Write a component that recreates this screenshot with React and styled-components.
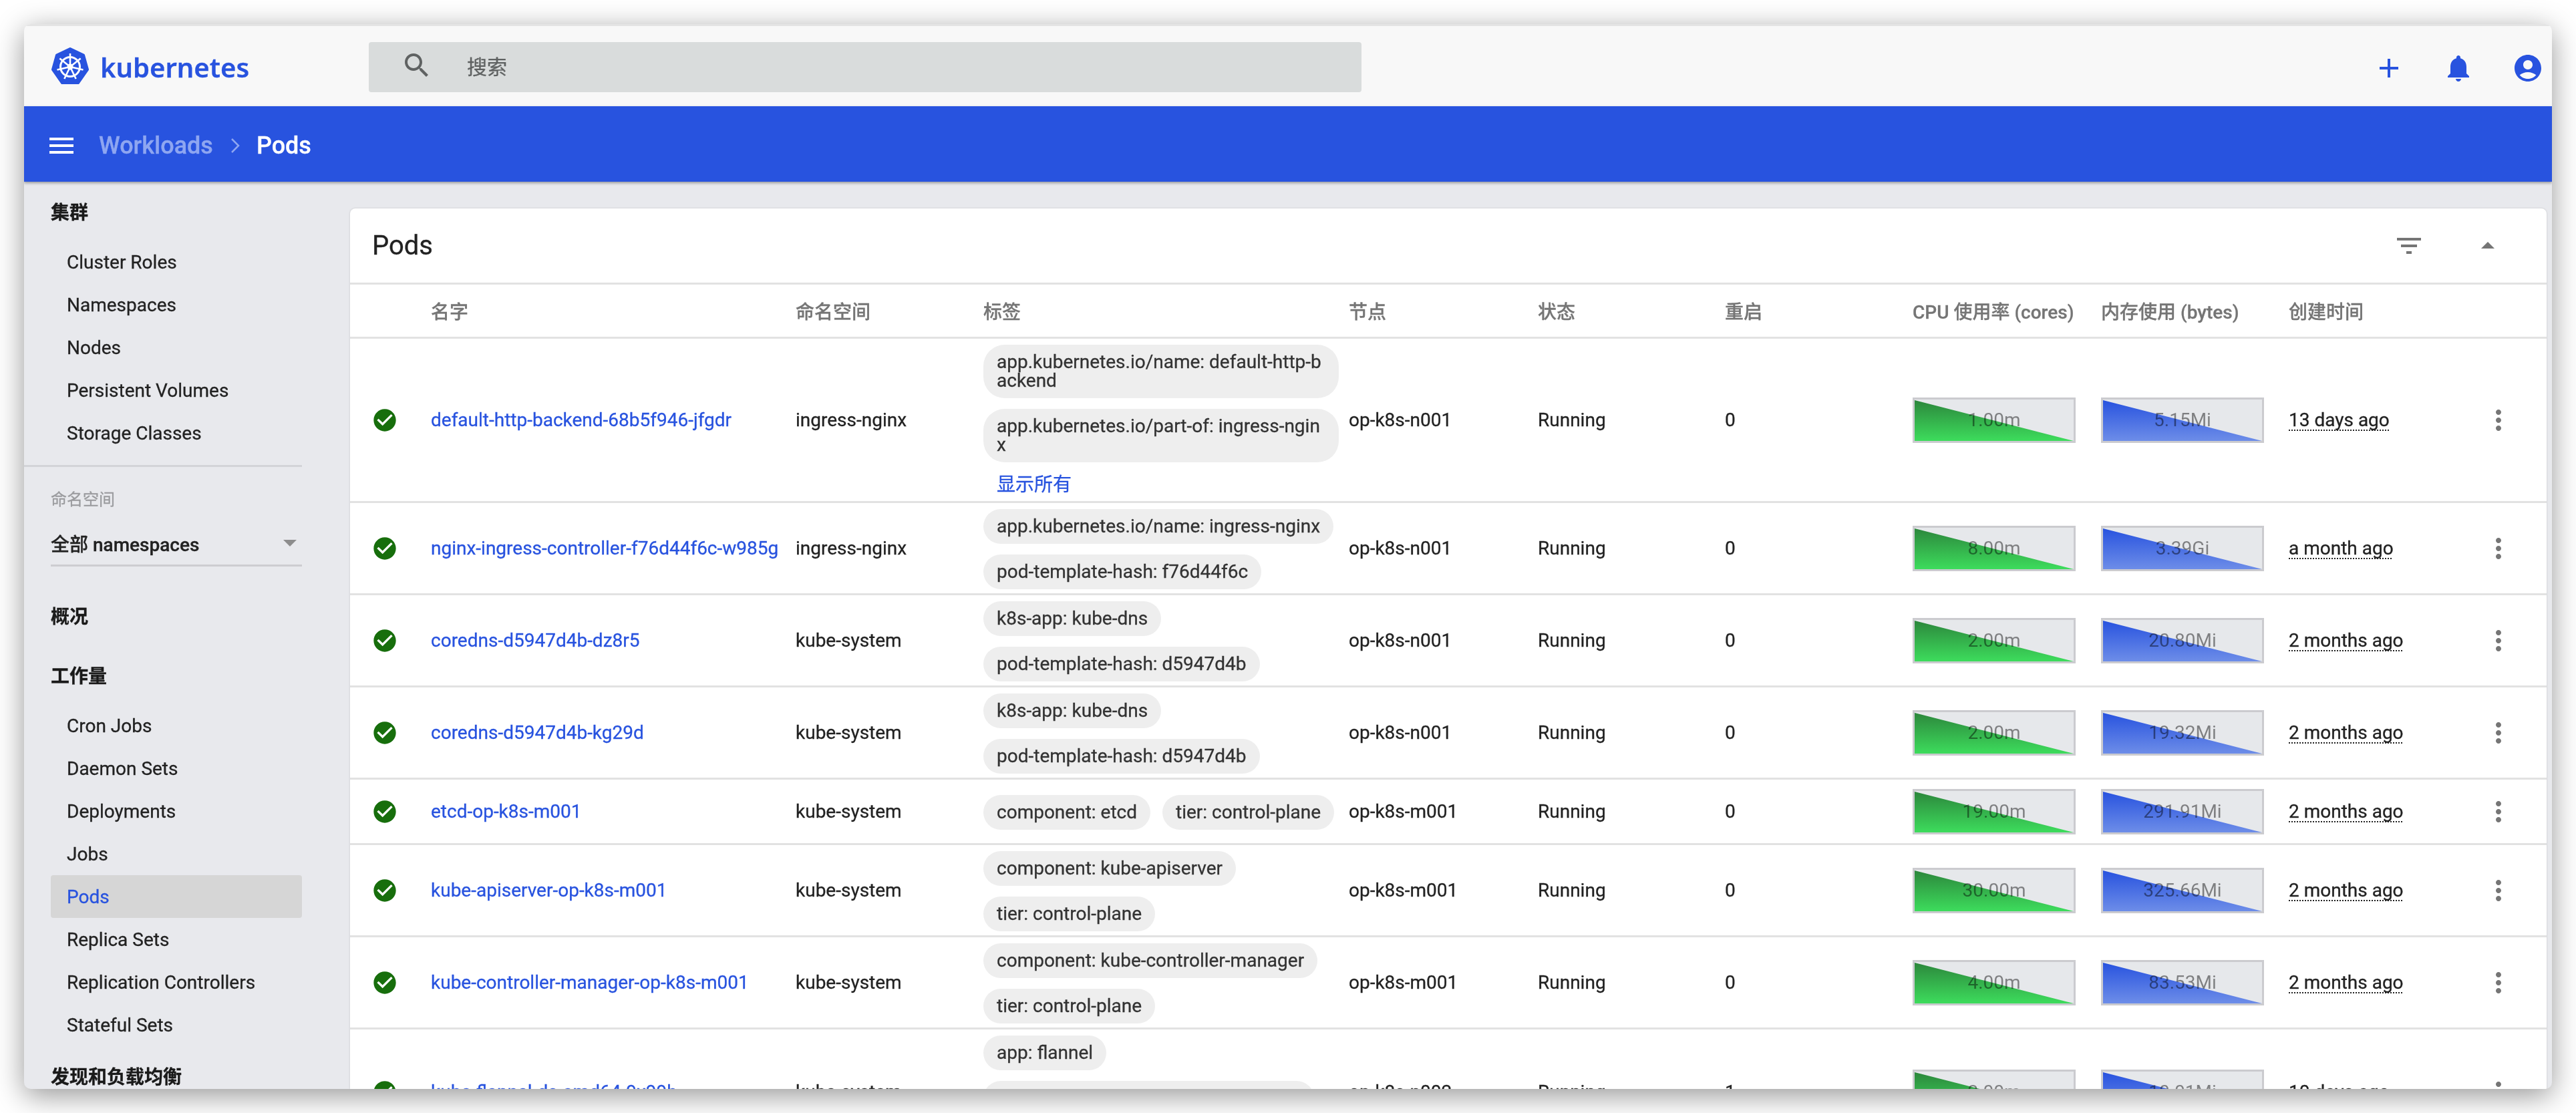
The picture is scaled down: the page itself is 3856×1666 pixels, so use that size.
import { useId } from 'react';
import styled, { createGlobalStyle } from 'styled-components';

const blue = '#2853df';
const fontStack = 'Roboto, "Noto Sans CJK SC", sans-serif';
const columns = '121px 546px 281px 547px 283px 280px 281px 282px 281px 274px 80px 1fr';

const GlobalStyle = createGlobalStyle`
  html, body {
    margin: 0;
    background: #fff;
    overflow: hidden;
  }
  * {
    box-sizing: border-box;
  }
`

const Page = styled.div`
  width: 3856px;
  height: 1666px;
  padding: 36px;
  font-family: ${fontStack};
  -webkit-text-stroke: .3px currentColor;
`

const Window = styled.div`
  width: 3784px;
  height: 1594px;
  display: flex;
  flex-direction: column;
  overflow: hidden;
  border-radius: 10px;
  background: #e8e9ed;
  box-shadow: 0 10px 44px rgba(0, 0, 0, .42);
  filter: blur(.7px);
`

const TopBar = styled.header`
  flex: none;
  height: 123px;
  display: flex;
  align-items: center;
  padding: 2px 12px 0 0;
  background: #f8f8f8;
  border-top: 3px solid #e4e4e4;
`

const Brand = styled.div`
  flex: none;
  width: 516px;
  display: flex;
  align-items: center;
  gap: 15px;
  padding-left: 39px;
`

const BrandName = styled.span`
  font-family: "Noto Sans", sans-serif;
  font-size: 40px;
  font-weight: 600;
  color: ${blue};
`

const Search = styled.div`
  width: 1486px;
  height: 75px;
  display: flex;
  align-items: center;
  gap: 51px;
  padding: 0 0 4px 48px;
  border-radius: 4px;
  background: #d9dcdc;
  font-size: 30px;
  color: #5f6262;
`

const Actions = styled.div`
  margin-left: auto;
  display: flex;
  gap: 56px;
  color: ${blue};
  padding-top: 4px;
`

const Icon = styled.svg`
  flex: none;
  display: block;
  width: ${(props) => props.size || 48}px;
  height: ${(props) => props.size || 48}px;
  fill: currentColor;
`

const ActionBar = styled.div`
  flex: none;
  height: 113px;
  display: flex;
  align-items: center;
  padding: 4px 0 0 32px;
  background: ${blue};
  box-shadow: 0 2px 4px rgba(0, 0, 0, .35);
  color: #fff;
  position: relative;
`

const Crumb = styled.span`
  font-size: 36px;
  font-weight: 500;
  color: ${(props) => (props.current ? '#fff' : '#8ea6f1')};
`

const CrumbArrow = styled.svg`
  width: 14px;
  height: 24px;
  margin: 0 25px 0 26px;
  fill: none;
  stroke: #8ea6f1;
  stroke-width: 2.5;
`

const MenuButton = styled.div`
  margin-right: 32px;
`

const Content = styled.div`
  flex: 1;
  min-height: 0;
  display: flex;
`

const Sidebar = styled.nav`
  flex: none;
  width: 488px;
  padding-top: 12px;
  overflow: hidden;
`

const Heading = styled.div`
  height: 64px;
  margin: ${(props) => props.spacing || '0 0 0 40px'};
  display: flex;
  align-items: center;
  font-size: 28px;
  font-weight: 700;
  color: #1a1a1a;
`

const NavList = styled.div`
  width: 376px;
  margin: 12px 0 0 40px;
`

const NavItem = styled.div`
  height: 64px;
  display: flex;
  align-items: center;
  padding-left: 24px;
  border-radius: 4px;
  font-size: 28px;
  background: ${(props) => (props.active ? '#d6d6d6' : 'transparent')};
  color: ${(props) => (props.active ? blue : '#222')};
`

const Divider = styled.div`
  width: 416px;
  height: 3px;
  margin-top: 16px;
  background: #d3d4d8;
`

const SelectLabel = styled.div`
  margin: 34px 0 0 40px;
  font-size: 24px;
  line-height: 30px;
  color: #9a9b9e;
`

const Select = styled.div`
  width: 376px;
  height: 64px;
  margin: 21px 0 0 40px;
  padding-bottom: 3px;
  display: flex;
  align-items: center;
  justify-content: space-between;
  border-bottom: 3px solid #cdcdd1;
  font-size: 28px;
  font-weight: 500;
  color: #222;
`

const SelectCaret = styled.span`
  width: 0;
  height: 0;
  margin-right: 8px;
  border-left: 10px solid transparent;
  border-right: 10px solid transparent;
  border-top: 10px solid #8d8d8d;
`

const Main = styled.main`
  flex: 1;
  min-width: 0;
  padding: 40px 8px 0 0;
`

const Card = styled.section`
  height: 100%;
  overflow: hidden;
  border-radius: 8px 8px 0 0;
  background: #fff;
  box-shadow: 0 0 3px rgba(0, 0, 0, .16);
`

const CardHeader = styled.div`
  height: 114px;
  display: flex;
  align-items: center;
  padding: 0 64px 0 33px;
  border-bottom: 3px solid #e2e2e2;
  color: #757575;
`

const CardTitle = styled.h2`
  flex: 1;
  margin: 0;
  font-size: 40px;
  font-weight: 400;
  color: #222;
`

const HeaderTool = styled.div`
  margin-left: ${(props) => props.gap || 0}px;
`

const HeadRow = styled.div`
  height: 81px;
  display: grid;
  grid-template-columns: ${columns};
  align-items: center;
  border-bottom: 3px solid #e2e2e2;
  font-size: 28px;
  font-weight: 500;
  color: #757575;
`

const Row = styled.div`
  min-height: 98px;
  display: grid;
  grid-template-columns: ${columns};
  align-items: center;
  border-bottom: 3px solid #e2e2e2;
  font-size: 28px;
  color: #222;
`

const StatusCell = styled.div`
  display: flex;
  padding-left: 32px;
  color: #176e0c;
`

const NameLink = styled.a`
  color: ${blue};
  white-space: nowrap;
`

const LabelCell = styled.div`
  display: flex;
  flex-wrap: wrap;
  align-items: center;
  gap: 16px 18px;
  padding: 9px 0 6px;
`

const Chip = styled.span`
  max-width: 532px;
  padding: 12px 20px;
  border-radius: 32px;
  background: #eee;
  font-size: 28px;
  line-height: 28px;
  color: #333;
  word-break: break-all;
`

const ShowAll = styled.a`
  flex-basis: 100%;
  padding-left: 20px;
  font-size: 28px;
  line-height: 36px;
  color: ${blue};
`

const Spark = styled.div`
  position: relative;
  width: 244px;
  height: 68px;
  border: 3px solid #cbcbcf;
  background: #e6e8eb;
`

const SparkChart = styled.svg`
  display: block;
  width: 100%;
  height: 100%;
`

const SparkValue = styled.span`
  position: absolute;
  inset: 0;
  display: flex;
  align-items: center;
  justify-content: center;
  font-size: 28px;
  color: rgba(0, 0, 0, .45);
  -webkit-text-stroke: 0;
`

const Age = styled.span`
  text-decoration: underline dotted 2px;
  text-decoration-skip-ink: none;
  text-underline-offset: 5px;
`

const MoreCell = styled.div`
  display: flex;
  justify-content: center;
  color: #757575;
`

const paths = {
  search: 'M15.5 14h-.79l-.28-.27C15.41 12.59 16 11.11 16 9.5 16 5.91 13.09 3 9.5 3S3 5.91 3 9.5 5.91 16 9.5 16c1.61 0 3.09-.59 4.23-1.57l.27.28v.79l5 4.99L20.49 19l-4.99-5zm-6 0C7.01 14 5 11.99 5 9.5S7.01 5 9.5 5 14 7.01 14 9.5 11.99 14 9.5 14z',
  add: 'M19 13h-6v6h-2v-6H5v-2h6V5h2v6h6v2z',
  bell: 'M12 22c1.1 0 2-.9 2-2h-4c0 1.1.89 2 2 2zm6-6v-5c0-3.07-1.64-5.64-4.5-6.32V4c0-.83-.67-1.5-1.5-1.5s-1.5.67-1.5 1.5v.68C7.63 5.36 6 7.92 6 11v5l-2 2v1h16v-1l-2-2z',
  account: 'M12 2C6.48 2 2 6.48 2 12s4.48 10 10 10 10-4.48 10-10S17.52 2 12 2zm0 4c1.93 0 3.5 1.57 3.5 3.5S13.93 13 12 13s-3.5-1.57-3.5-3.5S10.07 6 12 6zm0 14c-2.03 0-4.43-.82-6.14-2.88C7.55 15.8 9.68 15 12 15s4.45.8 6.14 2.12C16.43 19.18 14.03 20 12 20z',
  menu: 'M3 18h18v-2H3v2zm0-5h18v-2H3v2zm0-7v2h18V6H3z',
  filter: 'M10 18h4v-2h-4v2zM3 6v2h18V6H3zm3 7h12v-2H6v2z',
  up: 'M7 14l5-5 5 5z',
  more: 'M12 8c1.1 0 2-.9 2-2s-.9-2-2-2-2 .9-2 2 .9 2 2 2zm0 2c-1.1 0-2 .9-2 2s.9 2 2 2 2-.9 2-2-.9-2-2-2zm0 6c-1.1 0-2 .9-2 2s.9 2 2 2 2-.9 2-2-.9-2-2-2z',
  check: 'M12 2C6.48 2 2 6.48 2 12s4.48 10 10 10 10-4.48 10-10S17.52 2 12 2zm-2 15l-5-5 1.41-1.41L10 14.17l7.59-7.59L19 8l-9 9z',
};

const Glyph = ({ name, size }) => (
  <Icon viewBox="0 0 24 24" size={size}>
    <path d={paths[name]} />
  </Icon>
);

const spokes = [0, 51.4, 102.9, 154.3, 205.7, 257.1, 308.6];

const Logo = () => (
  <svg width="60" height="60" viewBox="0 0 60 60">
    <polygon fill={blue} stroke={blue} strokeWidth="4" strokeLinejoin="round" points="30,3 50,12.5 56,34 42,54 18,54 4,34 10,12.5" />
    <g fill="none" stroke="#fff">
      <circle cx="30" cy="30" r="14.5" strokeWidth="3" />
      {spokes.map((angle) => (
        <line key={angle} x1="30" y1="30" x2="30" y2="10" strokeWidth="2.6" transform={`rotate(${angle} 30 30)`} />
      ))}
    </g>
    <circle cx="30" cy="30" r="4.5" fill="#fff" />
  </svg>
);

const gradients = {
  cpu: ['#2c873c', '#3ddc5c'],
  mem: ['#2853df', '#6d8de8'],
};

const Sparkline = ({ kind, value }) => {
  const id = useId();
  return (
    <Spark>
      <SparkChart viewBox="0 0 238 62" preserveAspectRatio="none">
        <defs>
          <linearGradient id={id} x1="0" y1="0" x2="0" y2="1">
            <stop offset="0" stopColor={gradients[kind][0]} />
            <stop offset="1" stopColor={gradients[kind][1]} />
          </linearGradient>
        </defs>
        <polygon fill={`url(#${id})`} points="0,1 238,62 0,62" />
      </SparkChart>
      <SparkValue>{value}</SparkValue>
    </Spark>
  );
};

const headers = ['', '名字', '命名空间', '标签', '节点', '状态', '重启', 'CPU 使用率 (cores)', '内存使用 (bytes)', '创建时间'];

const pods = [{
  name: 'default-http-backend-68b5f946-jfgdr',
  namespace: 'ingress-nginx',
  labels: ['app.kubernetes.io/name: default-http-backend', 'app.kubernetes.io/part-of: ingress-nginx'],
  showAll: true,
  node: 'op-k8s-n001',
  restarts: 0,
  cpu: '1.00m',
  mem: '5.15Mi',
  age: '13 days ago',
}, {
  name: 'nginx-ingress-controller-f76d44f6c-w985g',
  namespace: 'ingress-nginx',
  labels: ['app.kubernetes.io/name: ingress-nginx', 'pod-template-hash: f76d44f6c'],
  node: 'op-k8s-n001',
  restarts: 0,
  cpu: '8.00m',
  mem: '3.39Gi',
  age: 'a month ago',
}, {
  name: 'coredns-d5947d4b-dz8r5',
  namespace: 'kube-system',
  labels: ['k8s-app: kube-dns', 'pod-template-hash: d5947d4b'],
  node: 'op-k8s-n001',
  restarts: 0,
  cpu: '2.00m',
  mem: '20.80Mi',
  age: '2 months ago',
}, {
  name: 'coredns-d5947d4b-kg29d',
  namespace: 'kube-system',
  labels: ['k8s-app: kube-dns', 'pod-template-hash: d5947d4b'],
  node: 'op-k8s-n001',
  restarts: 0,
  cpu: '2.00m',
  mem: '19.32Mi',
  age: '2 months ago',
}, {
  name: 'etcd-op-k8s-m001',
  namespace: 'kube-system',
  labels: ['component: etcd', 'tier: control-plane'],
  node: 'op-k8s-m001',
  restarts: 0,
  cpu: '19.00m',
  mem: '291.91Mi',
  age: '2 months ago',
}, {
  name: 'kube-apiserver-op-k8s-m001',
  namespace: 'kube-system',
  labels: ['component: kube-apiserver', 'tier: control-plane'],
  node: 'op-k8s-m001',
  restarts: 0,
  cpu: '30.00m',
  mem: '325.66Mi',
  age: '2 months ago',
}, {
  name: 'kube-controller-manager-op-k8s-m001',
  namespace: 'kube-system',
  labels: ['component: kube-controller-manager', 'tier: control-plane'],
  node: 'op-k8s-m001',
  restarts: 0,
  cpu: '4.00m',
  mem: '83.53Mi',
  age: '2 months ago',
}, {
  name: 'kube-flannel-ds-amd64-9x99b',
  namespace: 'kube-system',
  labels: ['app: flannel', 'controller-revision-hash: 7f489b5c67'],
  showAll: true,
  node: 'op-k8s-n002',
  restarts: 1,
  cpu: '2.00m',
  mem: '10.01Mi',
  age: '10 days ago',
}];

const clusterItems = ['Cluster Roles', 'Namespaces', 'Nodes', 'Persistent Volumes', 'Storage Classes'];
const workloadItems = ['Cron Jobs', 'Daemon Sets', 'Deployments', 'Jobs', 'Pods', 'Replica Sets', 'Replication Controllers', 'Stateful Sets'];

const PodRow = ({ pod }) => (
  <Row>
    <StatusCell><Glyph name="check" size={40} /></StatusCell>
    <div><NameLink>{pod.name}</NameLink></div>
    <div>{pod.namespace}</div>
    <LabelCell>
      {pod.labels.map((label) => <Chip key={label}>{label}</Chip>)}
      {pod.showAll && <ShowAll>显示所有</ShowAll>}
    </LabelCell>
    <div>{pod.node}</div>
    <div>Running</div>
    <div>{pod.restarts}</div>
    <Sparkline kind="cpu" value={pod.cpu} />
    <Sparkline kind="mem" value={pod.mem} />
    <div><Age>{pod.age}</Age></div>
    <MoreCell><Glyph name="more" /></MoreCell>
  </Row>
);

const App = () => (
  <Page>
    <GlobalStyle />
    <Window>
      <TopBar>
        <Brand>
          <Logo />
          <BrandName>kubernetes</BrandName>
        </Brand>
        <Search>
          <Glyph name="search" />
          <span>搜索</span>
        </Search>
        <Actions>
          <Glyph name="add" />
          <Glyph name="bell" />
          <Glyph name="account" />
        </Actions>
      </TopBar>
      <ActionBar>
        <MenuButton><Glyph name="menu" /></MenuButton>
        <Crumb>Workloads</Crumb>
        <CrumbArrow viewBox="0 0 14 24"><polyline points="2,2 12,12 2,22" /></CrumbArrow>
        <Crumb current>Pods</Crumb>
      </ActionBar>
      <Content>
        <Sidebar>
          <Heading>集群</Heading>
          <NavList>
            {clusterItems.map((item) => <NavItem key={item}>{item}</NavItem>)}
          </NavList>
          <Divider />
          <SelectLabel>命名空间</SelectLabel>
          <Select>
            <span>全部 namespaces</span>
            <SelectCaret />
          </Select>
          <Heading spacing="41px 0 0 40px">概况</Heading>
          <Heading spacing="25px 0 0 40px">工作量</Heading>
          <NavList>
            {workloadItems.map((item) => <NavItem key={item} active={item === 'Pods'}>{item}</NavItem>)}
          </NavList>
          <Heading spacing="12px 0 0 40px">发现和负载均衡</Heading>
        </Sidebar>
        <Main>
          <Card>
            <CardHeader>
              <CardTitle>Pods</CardTitle>
              <HeaderTool><Glyph name="filter" /></HeaderTool>
              <HeaderTool gap={70}><Glyph name="up" /></HeaderTool>
            </CardHeader>
            <HeadRow>
              {headers.map((header, i) => <div key={i}>{header}</div>)}
            </HeadRow>
            {pods.map((pod) => <PodRow pod={pod} key={pod.name} />)}
          </Card>
        </Main>
      </Content>
    </Window>
  </Page>
);

export default App;
